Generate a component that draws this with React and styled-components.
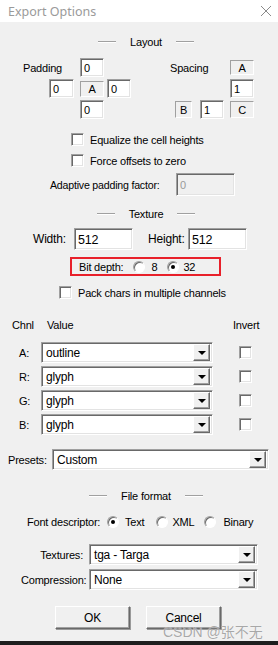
import styled, { createGlobalStyle } from "styled-components";

const Global = createGlobalStyle`
  html, body { margin: 0; padding: 0; background: #f0f0f0; }
  * { box-sizing: border-box; }
`;

const Window = styled.div`
  position: relative;
  width: 278px;
  height: 645px;
  overflow: hidden;
  display: flex;
  flex-direction: column;
  background: #f0f0f0;
  font-family: "Liberation Sans", Arial, sans-serif;
  font-size: 11px;
  letter-spacing: -0.2px;
  color: #000;
`;

const TitleBar = styled.div`
  height: 22px;
  background: #fff;
  display: flex;
  align-items: center;
  justify-content: space-between;
  padding: 0 6px 0 8px;
  font-family: "Noto Sans", "Open Sans", sans-serif;
  font-size: 12.5px;
  letter-spacing: 0;
  color: #9a9a9a;
`;

const Block = styled.div`
  display: flex;
  align-items: center;
  margin-top: ${p => p.$mt || 0}px;
  padding-left: ${p => p.$pl || 0}px;
  height: ${p => (p.$h ? `${p.$h}px` : "auto")};
  gap: ${p => p.$gap || 0}px;
`;

const Header = styled.div`
  display: flex;
  align-items: center;
  justify-content: center;
  gap: 14px;
  height: 14px;
  padding-left: 14px;
  margin-top: ${p => p.$mt}px;
`;

const Etch = styled.span`
  width: 18px;
  height: 2px;
  border-top: 1px solid #a0a0a0;
  border-bottom: 1px solid #fff;
`;

const PadGrid = styled.div`
  display: grid;
  grid-template-columns: 26px 25px 6px 24px 3px 24px;
  grid-template-rows: 19px 19px 19px;
  row-gap: 2px;
  margin-left: 23px;
`;

const SpaceGrid = styled.div`
  display: grid;
  grid-template-columns: 7px 17px 8px 24px 6px 24px;
  grid-template-rows: 19px 19px 19px;
  row-gap: 2px;
  margin-left: 37px;
`;

const Cell = styled.div`
  grid-column: ${p => p.$col};
  grid-row: ${p => p.$row};
  display: flex;
  align-items: center;
`;

const Edit = styled.div`
  width: ${p => (p.$w ? `${p.$w}px` : "100%")};
  height: ${p => (p.$h ? `${p.$h}px` : "100%")};
  background: ${p => (p.$disabled ? "#f0f0f0" : "#fff")};
  color: ${p => (p.$disabled ? "#9a9a9a" : "#000")};
  border: 1px solid;
  border-color: #a0a0a0 #fff #fff #a0a0a0;
  box-shadow: inset 1px 1px #696969, inset -1px -1px #e3e3e3;
  padding: 1px 0 0 3px;
  display: flex;
  align-items: center;
  font-size: ${p => (p.$big ? "12.5px" : "11px")};
`;

const Tag = styled.div`
  width: 100%;
  height: ${p => p.$h || 16}px;
  border: 1px solid;
  border-color: #a0a0a0 #fff #fff #a0a0a0;
  display: flex;
  align-items: center;
  justify-content: center;
`;

const Check = styled.span`
  width: 13px;
  height: 13px;
  flex: none;
  background: #fff;
  border: 1px solid;
  border-color: #a0a0a0 #fff #fff #a0a0a0;
  box-shadow: inset 1px 1px #696969, inset -1px -1px #e3e3e3;
  margin-left: ${p => p.$ml || 0}px;
`;

const Label = styled.span`
  margin-left: ${p => p.$ml || 0}px;
  width: ${p => (p.$w ? `${p.$w}px` : "auto")};
  text-align: ${p => p.$align || "left"};
  font-size: ${p => (p.$fs ? `${p.$fs}px` : "inherit")};
  flex: none;
  white-space: nowrap;
`;

const Radio = styled.span`
  position: relative;
  width: 12px;
  height: 12px;
  flex: none;
  border-radius: 50%;
  background: #fff;
  border: 1px solid;
  border-color: #a0a0a0 #fff #fff #a0a0a0;
  box-shadow: inset 1px 1px #696969;
  margin-left: ${p => p.$ml || 0}px;
  &::after {
    content: "";
    display: ${p => (p.$on ? "block" : "none")};
    position: absolute;
    left: 3px;
    top: 3px;
    width: 4px;
    height: 4px;
    border-radius: 50%;
    background: #000;
  }
`;

const Highlight = styled.div`
  display: flex;
  align-items: center;
  margin: 7px 0 0 70px;
  width: 151px;
  height: 19px;
  border: 2px solid #e8202a;
  padding-left: 7px;
`;

const Combo = styled.div`
  width: ${p => p.$w}px;
  height: 21px;
  flex: none;
  background: #fff;
  border: 1px solid;
  border-color: #a0a0a0 #fff #fff #a0a0a0;
  box-shadow: inset 1px 1px #696969, inset -1px -1px #e3e3e3;
  display: flex;
  align-items: center;
  padding: 2px 2px 2px 4px;
  margin-left: ${p => p.$ml || 0}px;
  font-size: 12px;
`;

const ComboText = styled.span`
  flex: 1;
`;

const ComboButton = styled.span`
  width: 17px;
  height: 17px;
  background: #f0f0f0;
  border: 1px solid;
  border-color: #fff #696969 #696969 #fff;
  box-shadow: inset -1px -1px #a0a0a0;
  display: flex;
  align-items: center;
  justify-content: center;
  &::after {
    content: "";
    border-left: 4px solid transparent;
    border-right: 4px solid transparent;
    border-top: 4px solid #000;
    margin-top: 1px;
  }
`;

const Channels = styled.div`
  display: flex;
  flex-direction: column;
  gap: 3px;
  margin-top: 10px;
`;

const FormGrid = styled.div`
  display: grid;
  grid-template-columns: 62px 169px;
  grid-auto-rows: 21px;
  row-gap: 4px;
  column-gap: 6px;
  align-items: center;
  margin: 16px 0 0 21px;
`;

const FormLabel = styled.span`
  text-align: right;
  white-space: nowrap;
  font-size: 11px;
`;

const Buttons = styled.div`
  display: flex;
  gap: 16px;
  margin: 16px 0 0 55px;
`;

const Button = styled.div`
  width: 75px;
  height: 23px;
  background: #f0f0f0;
  border: 1px solid;
  border-color: #fff #696969 #696969 #fff;
  box-shadow: inset -1px -1px #a0a0a0, 1px 1px #9a9a9a;
  display: flex;
  align-items: center;
  justify-content: center;
  font-size: 12px;
`;

const Spacer = styled.div`
  flex: 1;
`;

const BottomEdge = styled.div`
  height: 4px;
  background: #1e1e1e;
`;

const Watermark = styled.div`
  position: absolute;
  left: 163px;
  top: 621px;
  font-family: "Liberation Sans", "Noto Sans CJK SC", sans-serif;
  font-size: 14px;
  letter-spacing: 0;
  color: rgba(140, 140, 140, 0.75);
  text-shadow: 0 0 1px #fff;
`;

const channels = [
  ["A:", "outline"],
  ["R:", "glyph"],
  ["G:", "glyph"],
  ["B:", "glyph"],
];

export default function App() {
  return (
    <Window>
      <Global />
      <TitleBar>
        <span>Export Options</span>
        <svg width="12" height="12" viewBox="0 0 12 12">
          <path d="M1 1 L11 11 M11 1 L1 11" stroke="#8a8a8a" strokeWidth="1" fill="none" />
        </svg>
      </TitleBar>

      <Header $mt={13}>
        <Etch />
        <span>Layout</span>
        <Etch />
      </Header>

      <Block $mt={9}>
        <PadGrid>
          <Cell $col="1 / 4" $row={1}>Padding</Cell>
          <Cell $col={4} $row={1}><Edit>0</Edit></Cell>
          <Cell $col={2} $row={2}><Edit>0</Edit></Cell>
          <Cell $col={4} $row={2}><Tag>A</Tag></Cell>
          <Cell $col={6} $row={2}><Edit>0</Edit></Cell>
          <Cell $col={4} $row={3}><Edit>0</Edit></Cell>
        </PadGrid>
        <SpaceGrid>
          <Cell $col="1 / 5" $row={1} style={{ paddingLeft: "2px" }}>Spacing</Cell>
          <Cell $col={6} $row={1}><Tag $h={15}>A</Tag></Cell>
          <Cell $col={6} $row={2}><Edit>1</Edit></Cell>
          <Cell $col={2} $row={3}><Tag $h={17}>B</Tag></Cell>
          <Cell $col={4} $row={3}><Edit>1</Edit></Cell>
          <Cell $col={6} $row={3}><Tag $h={17}>C</Tag></Cell>
        </SpaceGrid>
      </Block>

      <Block $mt={14} $pl={71} $h={13}>
        <Check />
        <Label $ml={6}>Equalize the cell heights</Label>
      </Block>
      <Block $mt={8} $pl={71} $h={13}>
        <Check />
        <Label $ml={6}>Force offsets to zero</Label>
      </Block>

      <Block $mt={6} $pl={50} $h={23}>
        <Label $w={126} $fs={10.6}>Adaptive padding factor:</Label>
        <Edit $w={59} $h={23} $disabled>0</Edit>
      </Block>

      <Header $mt={11}>
        <Etch />
        <span>Texture</span>
        <Etch />
      </Header>

      <Block $mt={7} $pl={33} $h={22}>
        <Label $w={41} $fs={12}>Width:</Label>
        <Edit $w={59} $h={22} $big>512</Edit>
        <Label $ml={15} $w={40} $fs={12}>Height:</Label>
        <Edit $w={59} $h={22} $big>512</Edit>
      </Block>

      <Highlight>
        <Label>Bit depth:</Label>
        <Radio $ml={10} />
        <Label $ml={6}>8</Label>
        <Radio $ml={10} $on />
        <Label $ml={4}>32</Label>
      </Highlight>

      <Block $mt={10} $pl={59} $h={13}>
        <Check />
        <Label $ml={6}>Pack chars in multiple channels</Label>
      </Block>

      <Block $mt={19} $pl={12} $h={14}>
        <Label $w={35}>Chnl</Label>
        <Label $w={186}>Value</Label>
        <Label>Invert</Label>
      </Block>

      <Channels>
        {channels.map(([ch, value]) => (
          <Block key={ch} $pl={19} $h={21}>
            <Label $w={22}>{ch}</Label>
            <Combo $w={172}>
              <ComboText>{value}</ComboText>
              <ComboButton />
            </Combo>
            <Check $ml={26} />
          </Block>
        ))}
      </Channels>

      <Block $mt={14} $pl={8} $h={21}>
        <Label $w={44}>Presets:</Label>
        <Combo $w={217}>
          <ComboText>Custom</ComboText>
          <ComboButton />
        </Combo>
      </Block>

      <Header $mt={19}>
        <Etch />
        <span>File format</span>
        <Etch />
      </Header>

      <Block $mt={12} $pl={27} $h={13}>
        <Label $w={80}>Font descriptor:</Label>
        <Radio $on />
        <Label $ml={6}>Text</Label>
        <Radio $ml={12} />
        <Label $ml={4}>XML</Label>
        <Radio $ml={10} />
        <Label $ml={7}>Binary</Label>
      </Block>

      <FormGrid>
        <FormLabel>Textures:</FormLabel>
        <Combo $w={169}>
          <ComboText>tga - Targa</ComboText>
          <ComboButton />
        </Combo>
        <FormLabel>Compression:</FormLabel>
        <Combo $w={169}>
          <ComboText>None</ComboText>
          <ComboButton />
        </Combo>
      </FormGrid>

      <Buttons>
        <Button>OK</Button>
        <Button>Cancel</Button>
      </Buttons>

      <Spacer />
      <BottomEdge />
      <Watermark>CSDN @张不无</Watermark>
    </Window>
  );
}
